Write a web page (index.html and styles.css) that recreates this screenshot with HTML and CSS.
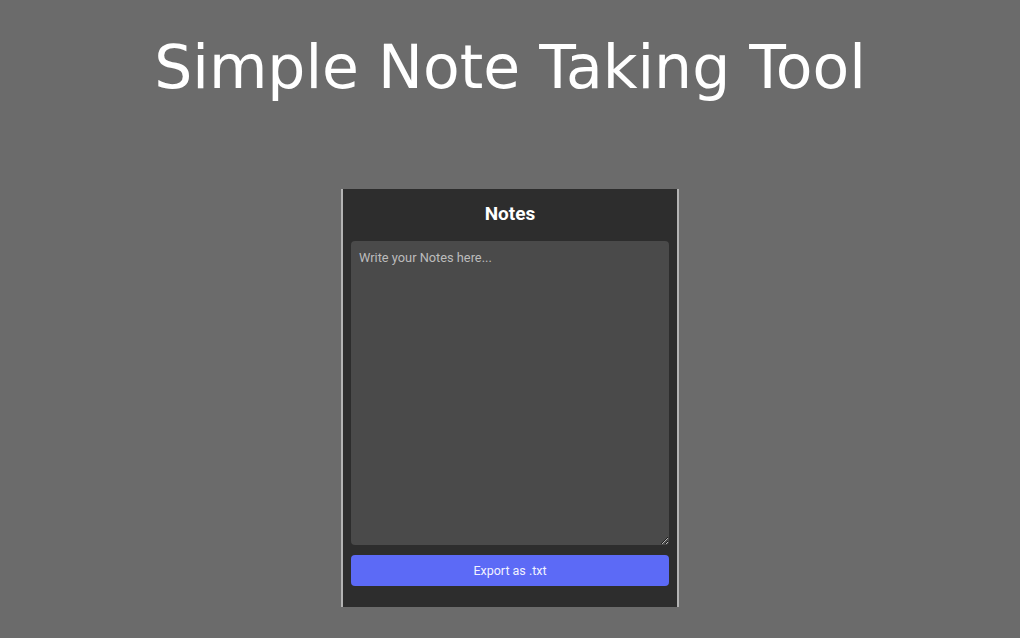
FILE: index.html
```html
<!DOCTYPE html>
<html lang="en">
<head>
<meta charset="utf-8">
<title>Simple Note Taking Tool</title>
<link rel="stylesheet" href="styles.css">
</head>
<body>
  <h1 class="page-title">Simple Note Taking Tool</h1>
  <main class="card">
    <h2 class="card-title">Notes</h2>
    <textarea class="notes" placeholder="Write your Notes here..."></textarea>
    <button class="export-btn" type="button">Export as .txt</button>
  </main>
</body>
</html>
```
FILE: styles.css
```css
html, body {
  margin: 0;
  padding: 0;
}
body {
  background: #6b6b6b;
  display: flex;
  flex-direction: column;
  align-items: center;
  font-family: Roboto, "Liberation Sans", sans-serif;
}
.page-title {
  margin: 29px 0 0;
  font-family: "DejaVu Sans", Verdana, sans-serif;
  font-weight: normal;
  font-size: 60px;
  line-height: 76px;
  color: #ffffff;
  letter-spacing: 0;
}
.card {
  margin-top: 84px;
  width: 318px;
  padding: 0 8px 21px;
  background: #2d2d2d;
  border-left: 2px solid #b4b4b4;
  border-right: 2px solid #b4b4b4;
  display: flex;
  flex-direction: column;
}
.card-title {
  margin: 0;
  height: 52px;
  line-height: 50px;
  text-align: center;
  font-size: 19px;
  font-weight: bold;
  color: #ffffff;
}
.notes {
  box-sizing: border-box;
  width: 318px;
  height: 304px;
  margin: 0;
  padding: 9px 8px;
  border: none;
  border-radius: 4px;
  background: #4a4a4a;
  color: #e0e0e0;
  font-family: Roboto, "Liberation Sans", sans-serif;
  font-size: 12.8px;
  line-height: 15px;
  resize: vertical;
  outline: none;
}
.notes::placeholder {
  color: #bcbcbc;
}
.export-btn {
  margin-top: 10px;
  height: 31px;
  border: none;
  border-radius: 4px;
  background: #5c6af6;
  color: #f2f2ff;
  font-family: Roboto, "Liberation Sans", sans-serif;
  font-size: 12.5px;
  cursor: pointer;
}
```
